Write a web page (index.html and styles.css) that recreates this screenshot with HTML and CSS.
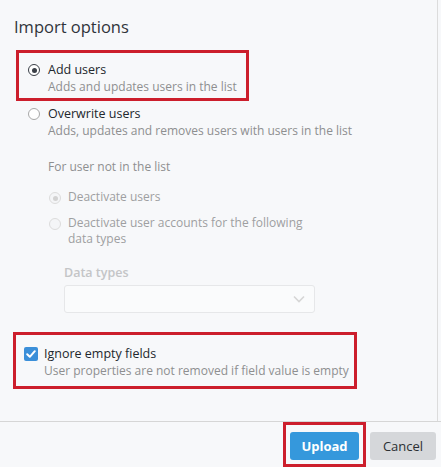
FILE: index.html
```html
<!DOCTYPE html>
<html>
<head>
<meta charset="utf-8">
<link rel="stylesheet" href="styles.css">
</head>
<body>
<div class="main">
  <h2 class="title">Import options</h2>
  <div class="hl hl-opt1">
    <div class="opt">
      <span class="radio checked"></span>
      <div class="opt-text">
        <div class="label">Add users</div>
        <div class="desc">Adds and updates users in the list</div>
      </div>
    </div>
  </div>
  <div class="opt opt2">
    <span class="radio"></span>
    <div class="opt-text">
      <div class="label">Overwrite users</div>
      <div class="desc">Adds, updates and removes users with users in the list</div>
    </div>
  </div>
  <div class="sub">
    <div class="sub-title">For user not in the list</div>
    <div class="subopt">
      <span class="radio dis checked"></span>
      <div class="subopt-text">Deactivate users</div>
    </div>
    <div class="subopt">
      <span class="radio dis"></span>
      <div class="subopt-text">Deactivate user accounts for the following<br>data types</div>
    </div>
    <div class="field">
      <div class="field-label">Data types</div>
      <div class="select">
        <svg class="chev" width="12" height="8" viewBox="0 0 12 8"><path d="M1 1.5 L6 6.5 L11 1.5" fill="none" stroke="#d6d6d6" stroke-width="1.6"/></svg>
      </div>
    </div>
  </div>
  <div class="hl hl-check">
    <div class="opt">
      <span class="check">
        <svg width="14" height="14" viewBox="0 0 14 14"><path d="M3.2 7.2 L5.8 9.8 L10.8 4.2" fill="none" stroke="#fff" stroke-width="2" stroke-linecap="round" stroke-linejoin="round"/></svg>
      </span>
      <div class="opt-text">
        <div class="label">Ignore empty fields</div>
        <div class="desc">User properties are not removed if field value is empty</div>
      </div>
    </div>
  </div>
</div>
<div class="footer">
  <div class="hl hl-btn"><button class="btn primary">Upload</button></div>
  <button class="btn secondary">Cancel</button>
</div>
</body>
</html>
```
FILE: styles.css
```css
html, body {
  margin: 0;
  padding: 0;
}
body {
  width: 441px;
  height: 467px;
  background: #f7f8fa;
  font-family: "Open Sans", "Noto Sans", sans-serif;
  color: #2b2f33;
  overflow: hidden;
}
.main {
  height: 421px;
  box-sizing: border-box;
  width: 438px;
  border-right: 1px solid #dcdcdc;
  padding: 15px 0 0 0;
}
.title {
  margin: 0 0 0 14px;
  font-size: 16.5px;
  font-weight: 400;
  line-height: 24px;
  color: #30343a;
}
.hl {
  border: 3px solid #cc1e2c;
  box-sizing: border-box;
}
.hl-opt1 {
  margin: 11px 0 0 16px;
  width: 233px;
  height: 51px;
  padding: 8px 0 0 9px;
}
.opt {
  display: flex;
  align-items: flex-start;
}
.radio {
  flex: none;
  width: 12px;
  height: 12px;
  border: 1px solid #9a9a9a;
  border-radius: 50%;
  box-sizing: border-box;
  margin-top: 3px;
  margin-right: 8px;
  background: #fff;
  position: relative;
}
.radio.checked {
  border: 1.5px solid #3a3f47;
}
.radio.checked::after {
  content: "";
  position: absolute;
  left: 50%;
  top: 50%;
  width: 5px;
  height: 5px;
  margin: -2.5px 0 0 -2.5px;
  border-radius: 50%;
  background: #3a3f47;
}
.radio.dis {
  border: 1px solid #dcdcdc;
  background: #f4f5f7;
}
.radio.dis.checked::after {
  background: #d2d2d2;
}
.label {
  font-size: 12.5px;
  line-height: 17px;
  color: #22272d;
}
.desc {
  font-size: 12px;
  line-height: 17px;
  color: #8e8f90;
}
.opt2 {
  margin: 4px 0 0 28px;
}
.opt2 .radio {
  border-color: #a8a8a8;
}
.sub {
  margin: 19px 0 0 48px;
}
.sub-title {
  font-size: 12px;
  line-height: 17px;
  color: #8e8f90;
}
.subopt {
  display: flex;
  align-items: flex-start;
  margin-top: 14px;
  margin-left: 1px;
}
.subopt + .subopt {
  margin-top: 10px;
}
.subopt .radio {
  margin-right: 7px;
  margin-top: 3px;
}
.subopt-text {
  font-size: 12px;
  line-height: 16px;
  color: #9e9fa1;
}
.field {
  margin: 17px 0 0 16px;
}
.field-label {
  font-size: 12.5px;
  line-height: 17px;
  color: #c4c5c7;
  font-weight: 600;
}
.select {
  margin-top: 4px;
  width: 251px;
  height: 28px;
  box-sizing: border-box;
  border: 1px solid #e6e7e9;
  border-radius: 3px;
  background: #fafbfc;
  display: flex;
  align-items: center;
  justify-content: flex-end;
  padding-right: 9px;
}
.hl-check {
  margin: 19px 0 0 13px;
  width: 344px;
  height: 57px;
  padding: 10px 0 0 8px;
}
.check {
  flex: none;
  width: 14px;
  height: 14px;
  border-radius: 2px;
  background: #3b8fd9;
  margin-top: 2px;
  margin-right: 6px;
  display: flex;
}
.footer {
  border-top: 1px solid #d6d6d6;
  height: 46px;
  box-sizing: border-box;
  display: flex;
  align-items: flex-start;
  justify-content: flex-end;
  padding: 0 5px 0 0;
  gap: 4px;
}
.hl-btn {
  padding: 7px 4px 3px 4px;
  height: 45px;
}
.btn {
  font-family: "Open Sans", "Noto Sans", sans-serif;
  font-size: 13px;
  height: 28px;
  border: 0;
  border-radius: 3px;
  padding: 0;
  line-height: 28px;
}
.primary {
  width: 69px;
  background: #3598dc;
  color: #fff;
  font-weight: 700;
}
.secondary {
  margin-top: 10px;
  width: 66px;
  background: #d5d7da;
  color: #2b2f33;
}
```
